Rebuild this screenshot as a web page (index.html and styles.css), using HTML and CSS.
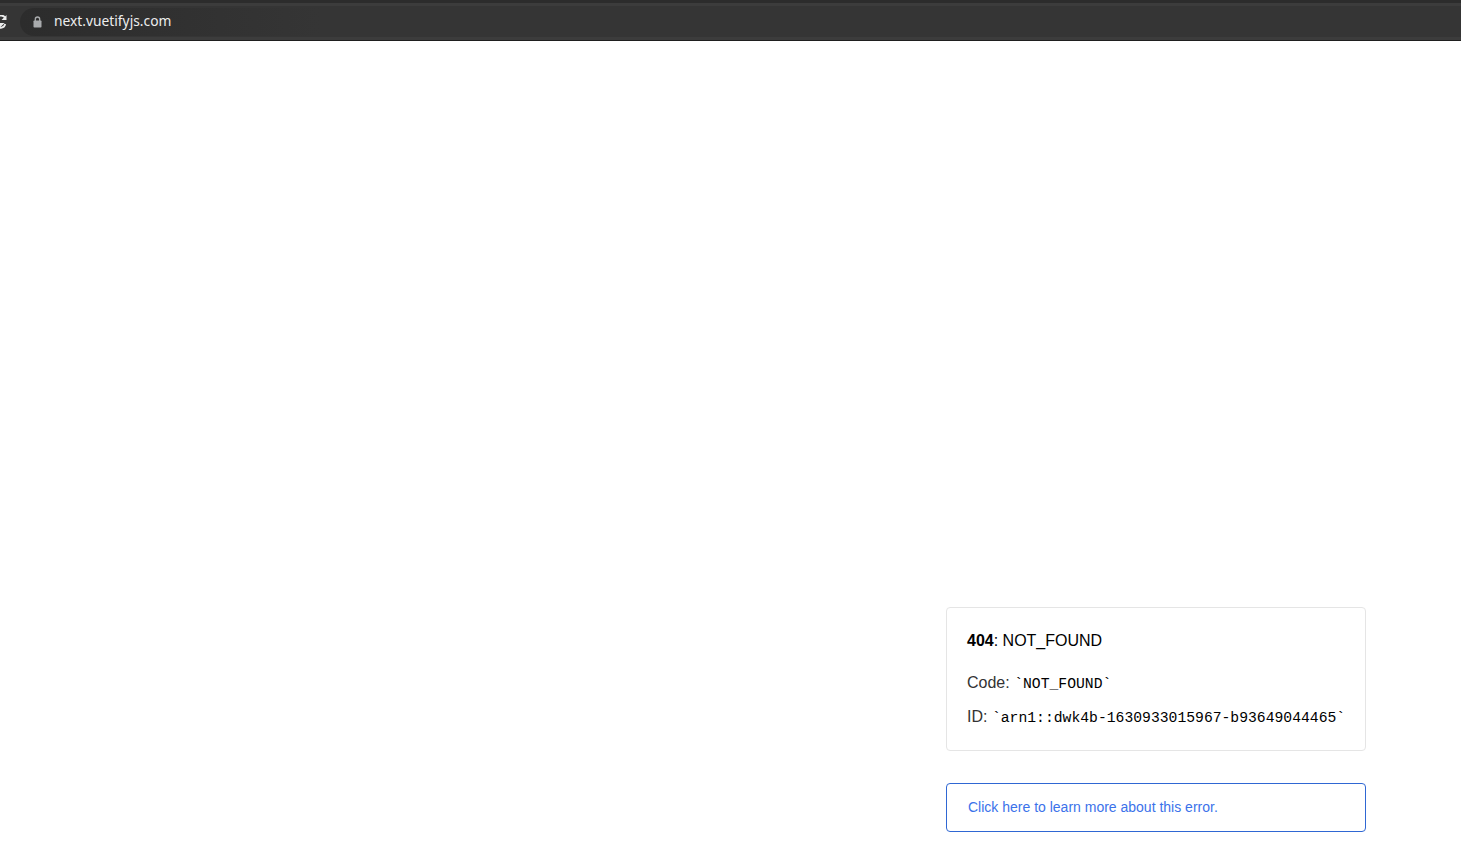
FILE: index.html
```html
<!DOCTYPE html>
<html lang="en">
<head>
<meta charset="utf-8">
<title>404: NOT_FOUND</title>
<link rel="stylesheet" href="styles.css">
</head>
<body>
<header class="chrome">
  <div class="chrome-top"></div>
  <div class="chrome-band"></div>
  <div class="toolbar">
    <svg class="reload" width="8" height="14" viewBox="0 0 8 14"><path d="M-3.500 4a4.800 4.800 0 0 1 8.500-1.500M5.200 9a4.800 4.800 0 0 1-8.500 2" fill="none" stroke="#eceded" stroke-width="1.800"/><path d="M6.500 0v5h-5zM-1 13.500V8h5.500z" fill="#eceded"/></svg>
    <div class="omnibox">
      <svg class="lock" width="9" height="12" viewBox="0 0 9 12"><path d="M2.300 5V3.200a2.200 2.200 0 0 1 4.400 0V5" fill="none" stroke="#a9abad" stroke-width="1.300"/><rect x="0.500" y="4.500" width="8" height="7" rx="0.800" fill="#a9abad"/></svg>
      <span class="url">next.vuetifyjs.com</span>
    </div>
  </div>
  <div class="chrome-band"></div>
  <div class="chrome-bottom"></div>
</header>
<main class="page">
  <section class="error-card">
    <p class="error-title"><strong>404</strong>: NOT_FOUND</p>
    <p class="error-line">Code: <code>`NOT_FOUND`</code></p>
    <p class="error-line">ID: <code>`arn1::dwk4b-1630933015967-b93649044465`</code></p>
  </section>
  <a class="learn-more" href="#">Click here to learn more about this error.</a>
</main>
</body>
</html>
```
FILE: styles.css
```css
* { box-sizing: border-box; }
html, body { margin: 0; height: 100%; }
body {
  background: #fff;
  font-family: "Liberation Sans", Arial, sans-serif;
  display: flex;
  flex-direction: column;
  overflow: hidden;
}
.chrome { height: 41px; flex: none; background: #353535; display: flex; flex-direction: column; }
.chrome-top { height: 3px; background: #2c2c2c; }
.chrome-band { height: 3px; background: #3c3c3c; }
.toolbar { flex: 1; display: flex; align-items: center; }
.chrome-bottom { height: 1px; background: #1f1f1f; }
.reload { flex: none; margin-right: 12px; }
.omnibox {
  width: 300px;
  height: 28px;
  border-radius: 14px 0 0 14px;
  background: linear-gradient(90deg, #2c2c2c, #353535);
  display: flex;
  align-items: center;
  padding-left: 13px;
  gap: 12px;
}
.url { font-family: "Noto Sans", "Open Sans", sans-serif; font-size: 13.8px; line-height: 18px; margin-top: -2px; color: #eceded; }
.page {
  flex: 1;
  display: flex;
  flex-direction: column;
  align-items: flex-end;
  justify-content: flex-end;
  padding: 0 95px 19px 0;
  gap: 32px;
}
.error-card {
  width: 420px;
  height: 144px;
  border: 1px solid #e5e5e5;
  border-radius: 4px;
  padding: 23px 20px 0;
}
.error-title { margin: 0 0 22px; font-size: 16px; line-height: 20px; color: #000; }
.error-line { margin: 0 0 14px; font-size: 16px; line-height: 20px; color: #333; white-space: nowrap; }
code { font-family: "Liberation Mono", monospace; font-size: 14.72px; line-height: 1; color: #000; }
.learn-more {
  width: 420px;
  height: 49px;
  border: 1px solid #2f67d3;
  border-radius: 4px;
  padding: 0 21px 2px;
  display: flex;
  align-items: center;
  font-size: 14px;
  color: #3b72ea;
  text-decoration: none;
}
```
